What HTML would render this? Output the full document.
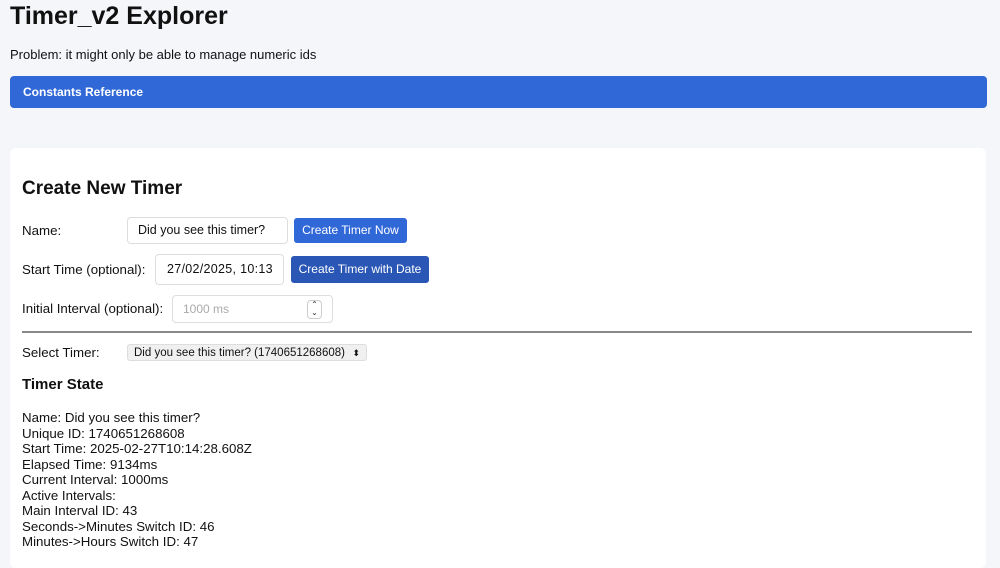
<!DOCTYPE html>
<html><head><style>
body{margin:0;background:#f5f6fa;font-family:"Liberation Sans",Arial,sans-serif;color:#111;width:1000px;height:557px;overflow:hidden;position:relative}
.a{position:absolute;white-space:nowrap}
.inp{position:absolute;background:#fff;border:1px solid #ddd;border-radius:4px;box-sizing:border-box;font-size:12.5px;}
.btn{position:absolute;color:#fff;border-radius:3px;font-size:12px;text-align:center;box-sizing:border-box}
.l{font-size:13.3px}
</style></head><body>
<div class="a" style="left:10px;top:2px;font-size:25px;font-weight:bold">Timer_v2 Explorer</div>
<div class="a" style="left:10px;top:47px;font-size:13px">Problem: it might only be able to manage numeric ids</div>
<div class="a" style="left:10px;top:76px;width:977px;height:32px;background:#3168d8;border-radius:4px;color:#fff;font-size:12px;font-weight:bold;line-height:32px;padding-left:13px;box-sizing:border-box">Constants Reference</div>
<div class="a" style="left:10px;top:148px;width:976px;height:420px;background:#fff;border-radius:6px"></div>
<div class="a" style="left:22px;top:178px;font-size:19px;font-weight:bold">Create New Timer</div>
<div class="a l" style="left:22px;top:223px">Name:</div>
<div class="inp" style="left:127px;top:217px;width:161px;height:27px;line-height:25px;padding-left:10px">Did you see this timer?</div>
<div class="btn" style="left:294px;top:218px;width:113px;height:25px;line-height:25px;background:#3168d8">Create Timer Now</div>
<div class="a l" style="left:22px;top:262px">Start Time (optional):</div>
<div class="inp" style="left:155px;top:254px;width:129px;height:31px;line-height:29px;padding-left:11px;letter-spacing:.3px">27/02/2025, 10:13</div>
<div class="btn" style="left:291px;top:256px;width:138px;height:27px;line-height:27px;background:#2a56b5">Create Timer with Date</div>
<div class="a l" style="left:22px;top:301px">Initial Interval (optional):</div>
<div class="inp" style="left:172px;top:295px;width:161px;height:28px;line-height:26px;padding-left:10px;color:#aaa;font-size:12px">1000 ms<span style="position:absolute;right:10px;top:4px;width:13px;height:17px;border:1px solid #ccc;border-radius:4px;font-size:8px;line-height:8px;color:#333;text-align:center">⌃<br>⌄</span></div>
<div class="a" style="left:22px;top:331px;width:950px;height:2px;background:#888"></div>
<div class="a l" style="left:22px;top:345px">Select Timer:</div>
<div class="a" style="left:127px;top:344px;width:240px;height:17px;background:#f0f0f0;border:1px solid #ddd;border-radius:3px;font-size:11.5px;line-height:16px;padding-left:6px;box-sizing:border-box">Did you see this timer? (1740651268608)<span style="position:absolute;right:6px;font-size:9px">⬍</span></div>
<div class="a" style="left:22px;top:376px;font-size:15px;font-weight:bold">Timer State</div>
<div class="a" style="left:22px;top:410px;font-size:13.3px;line-height:15.5px">Name: Did you see this timer?<br>Unique ID: 1740651268608<br>Start Time: 2025-02-27T10:14:28.608Z<br>Elapsed Time: 9134ms<br>Current Interval: 1000ms<br>Active Intervals:<br>Main Interval ID: 43<br>Seconds-&gt;Minutes Switch ID: 46<br>Minutes-&gt;Hours Switch ID: 47</div>
</body></html>
